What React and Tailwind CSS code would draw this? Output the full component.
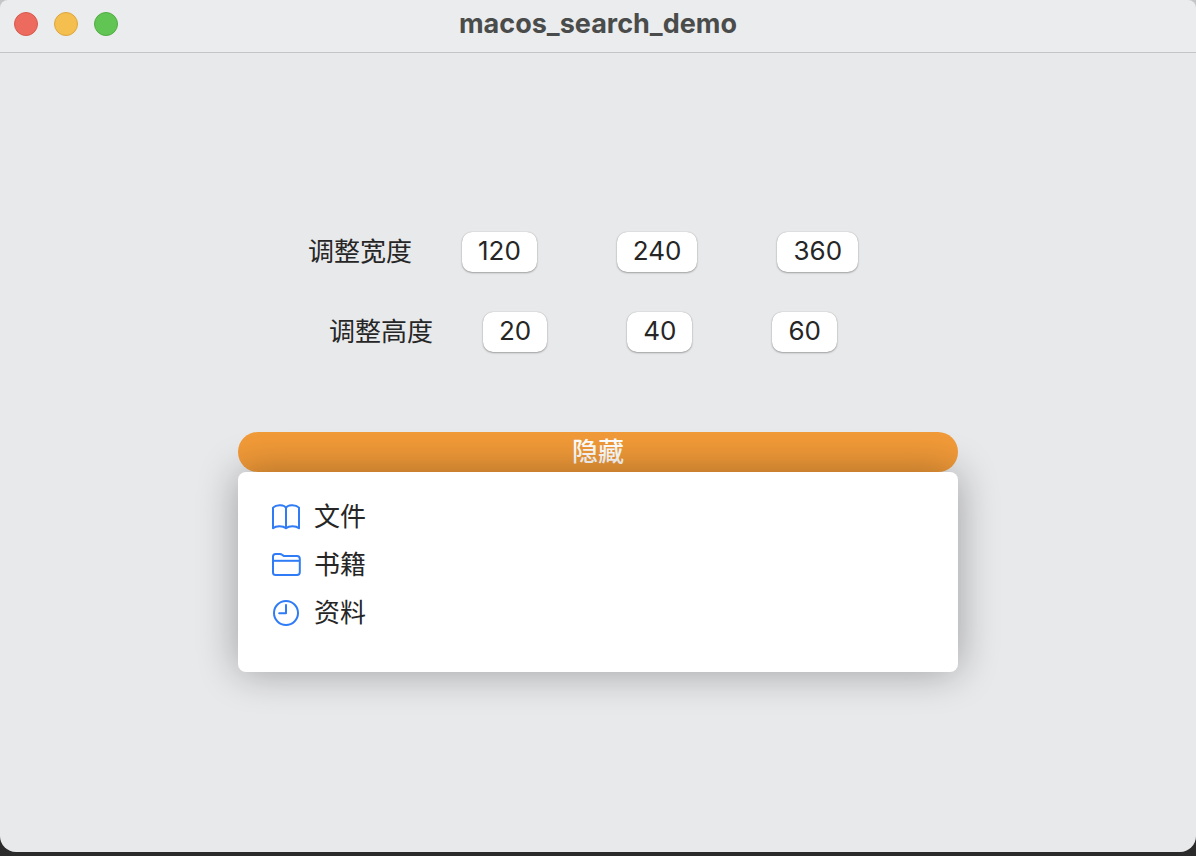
import { useState } from 'react';

const widths = [120, 240, 360];
const heights = [20, 40, 60];

const items = [
  { label: '文件', Icon: BookIcon },
  { label: '书籍', Icon: FolderIcon },
  { label: '资料', Icon: ClockIcon }
];

function BookIcon() {
  return (
    <svg className="w-8 h-8" viewBox="0 0 32 32" fill="none" stroke="currentColor" strokeWidth="2" strokeLinejoin="round" aria-hidden="true">
      <path d="M16 7C14.5 3.6 6.5 3.2 3 6.6V27.3C6 24.4 13 24.4 16 27.3C19 24.4 26 24.4 29 27.3V6.6C25.5 3.2 17.5 3.6 16 7V27.3" />
    </svg>
  );
}

function FolderIcon() {
  return (
    <svg className="w-8 h-8" viewBox="0 0 32 32" fill="none" stroke="currentColor" strokeWidth="2" strokeLinejoin="round" aria-hidden="true">
      <path d="M3 23.4V7.4C3 5.7 4 4.9 5.6 4.9H9.8C10.8 4.9 11.4 5.1 12.1 5.7L13 6.4C13.7 7 14.2 7.1 15.2 7.1H27C28.8 7.1 29.8 8.1 29.8 9.9V23.2C29.8 25 28.8 25.9 27 25.9H5.8C4 25.9 3 25.1 3 23.4Z" />
      <path d="M3 11.8H29.8" />
    </svg>
  );
}

function ClockIcon() {
  return (
    <svg className="w-8 h-8" viewBox="0 0 32 32" fill="none" stroke="currentColor" strokeWidth="2" strokeLinecap="round" strokeLinejoin="round" aria-hidden="true">
      <circle cx="16" cy="16" r="12" />
      <path d="M16 8V16.3H9.2" />
    </svg>
  );
}

function SizeRow({ label, values, onSelect }) {
  return (
    <div role="group" aria-label={label} className="flex items-center pr-[30px]">
      <span className="mr-[50px] leading-10">{label}</span>
      <div className="flex gap-20">
        {values.map((value) => (
          <button
            key={value}
            onClick={() => onSelect(value)}
            className="h-10 px-4 rounded-[10px] bg-white leading-[38px] pb-0.5 shadow-[0_0_1px_rgba(0,0,0,0.3),0_1px_2px_rgba(0,0,0,0.3)]"
          >
            {value}
          </button>
        ))}
      </div>
    </div>
  );
}

export default function App() {
  const [width, setWidth] = useState(360);
  const [height, setHeight] = useState(20);
  const [open, setOpen] = useState(true);

  return (
    <div className="min-h-screen flex flex-col bg-[#2b2b2b] pb-1 font-['Inter','Noto_Sans_CJK_SC',sans-serif] text-[26px] text-[#262626]">
      <div className="flex-1 flex flex-col rounded-b-2xl overflow-hidden bg-[#e8e9eb]">
        {/* Title bar */}
        <div className="bg-[#c4c5c7]">
          <header className="grid grid-cols-[1fr_auto_1fr] h-[53px] pb-1 px-3.5 items-center rounded-t-lg bg-[#ebecee] border-b border-[#c3c4c6]">
            <div className="flex gap-4">
              <button aria-label="Close" className="size-6 rounded-full bg-[#ed6a5e] border border-[#d65a4d]" />
              <button aria-label="Minimize" className="size-6 rounded-full bg-[#f5bf4f] border border-[#dba63f]" />
              <button aria-label="Zoom" className="size-6 rounded-full bg-[#61c554] border border-[#52ab43]" />
            </div>
            <h1 className="font-bold text-[27px] text-[#4a4c4b] leading-10">macos_search_demo</h1>
          </header>
        </div>

        {/* Content */}
        <main className="flex-1 flex flex-col items-center justify-center pb-0.5">
          <div className="flex flex-col items-center gap-10 mb-20">
            <SizeRow label="调整宽度" values={widths} onSelect={setWidth} />
            <SizeRow label="调整高度" values={heights} onSelect={setHeight} />
          </div>

          <div style={{ width: width * 2 }}>
            <button
              onClick={() => setOpen(!open)}
              aria-expanded={open}
              className="block w-full rounded-full bg-[#f19a38] text-white leading-10 font-medium"
              style={{ height: height * 2 }}
            >
              {open ? '隐藏' : '显示'}
            </button>
            {open && (
              <ul className="relative h-50 pt-[21px] px-8 rounded-lg bg-white shadow-[0_0_40px_rgba(0,0,0,0.33)]">
                {items.map(({ label, Icon }) => (
                  <li key={label} className="flex items-center gap-3 h-12 text-[#2f7cf6]">
                    <Icon />
                    <span className="text-[#262626]">{label}</span>
                  </li>
                ))}
              </ul>
            )}
          </div>
        </main>
      </div>
    </div>
  );
}
